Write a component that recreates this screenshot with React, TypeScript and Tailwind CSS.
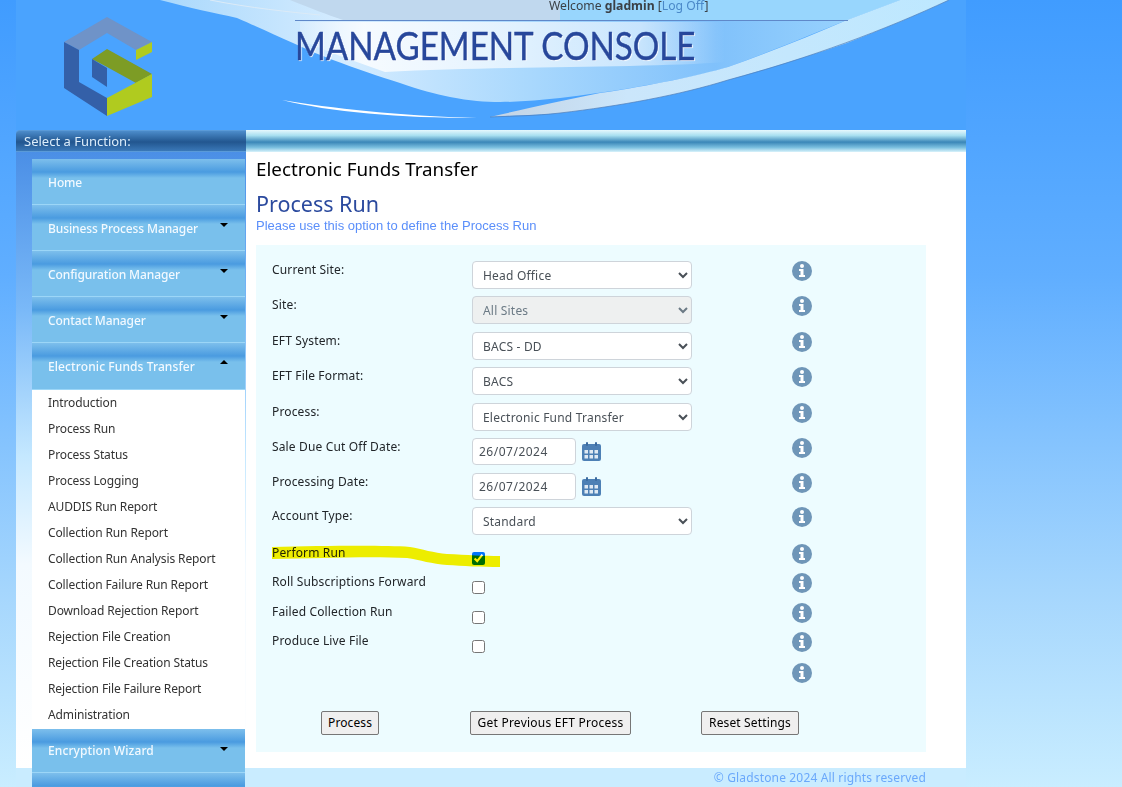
const menuTop = ["Home", "Business Process Manager", "Configuration Manager", "Contact Manager"];

const subMenu = [
  "Introduction",
  "Process Run",
  "Process Status",
  "Process Logging",
  "AUDDIS Run Report",
  "Collection Run Report",
  "Collection Run Analysis Report",
  "Collection Failure Run Report",
  "Download Rejection Report",
  "Rejection File Creation",
  "Rejection File Creation Status",
  "Rejection File Failure Report",
  "Administration",
];

const MenuItem = ({ label, caret, size = "h-[46px] pt-4 tracking-[-0.1px]" }: { label: string; caret?: "up" | "down"; size?: string }) => (
  <div
    className={`relative shrink-0 border-b border-[#9cd6f7] bg-[linear-gradient(#7dbfec,#4a9be0_13px,#79c0ec_19px,#79c0ec)] pl-4 text-[12px] font-medium leading-4 text-[#f2f9ff] ${size}`}
  >
    {label}
    {caret === "down" && (
      <span className="absolute right-[17px] top-[18px] h-0 w-0 border-x-4 border-t-4 border-x-transparent border-t-black" />
    )}
    {caret === "up" && (
      <span className="absolute right-[17px] top-[17px] h-0 w-0 border-x-4 border-b-4 border-x-transparent border-b-black" />
    )}
  </div>
);

const InfoIcon = () => (
  <svg width="20" height="20" viewBox="0 0 20 20">
    <circle cx="10" cy="10" r="10" fill="#6f96b8" />
    <circle cx="10" cy="5" r="2" fill="#fff" />
    <path d="M7 8h4.500v6H13v2H7v-2h1.500v-4H7z" fill="#fff" />
  </svg>
);

const CalendarIcon = () => (
  <svg width="21" height="21" viewBox="0 0 21 21">
    <rect x="1" y="3" width="19" height="17" rx="2" fill="#4d80b5" />
    <rect x="5" y="1" width="2" height="4" rx="1" fill="#3a6a9f" />
    <rect x="14" y="1" width="2" height="4" rx="1" fill="#3a6a9f" />
    {[3.500, 8.500, 13.500].map((x) =>
      [9, 14].map((y) => <rect key={`${x}-${y}`} x={x} y={y} width="3.500" height="3.500" fill="#dfe9f3" />)
    )}
  </svg>
);

const selectClass =
  "h-[28px] w-[220px] rounded border border-[#ced4da] bg-white pl-[6px] text-[12px] tracking-[0.2px] text-[#495057] disabled:bg-[#eef0f0] disabled:text-[#6b7a85] disabled:opacity-100";

const buttonClass = "absolute h-6 rounded-xs border border-[#767676] bg-[#efefef] text-[12px] text-black";

const FormRow = ({ label, height, children }: { label: string; height: string; children?: React.ReactNode }) => (
  <div className={`grid grid-cols-[200px_320px_20px] ${height}`}>
    <div className="pt-px text-[12px] leading-4 tracking-[0.15px] text-[#212529]">{label}</div>
    <div>{children}</div>
    <div>
      <InfoIcon />
    </div>
  </div>
);

const SelectField = ({ value, disabled }: { value: string; disabled?: boolean }) => (
  <select className={selectClass} defaultValue={value} disabled={disabled}>
    <option>{value}</option>
  </select>
);

const DateField = ({ value }: { value: string }) => (
  <div className="flex items-center gap-[5px]">
    <input
      className="h-[27px] w-[104px] rounded border border-[#ced4da] bg-white pl-[6px] text-[12px] tracking-[0.5px] text-[#495057]"
      defaultValue={value}
    />
    <CalendarIcon />
  </div>
);

export default function App() {
  return (
    <div
      className="h-[787px] w-[1122px] overflow-hidden bg-[linear-gradient(#409cff,#60aeff_35%,#a5d6fd_75%,#c9edff)] text-[12px]"
      style={{ fontFamily: '"Noto Sans", sans-serif' }}
    >
      <div className="ml-4 w-[950px]">
        {/* Header */}
        <div className="relative h-[130px] overflow-hidden bg-[#4aa3fe]">
          <svg className="absolute left-0 top-0" width="950" height="130" viewBox="16 0 950 130">
            <defs>
              <linearGradient id="waveFill" x1="0" y1="0" x2="1" y2="0">
                <stop offset="0" stopColor="#a9d8fc" />
                <stop offset="0.25" stopColor="#d5ecff" />
                <stop offset="0.5" stopColor="#a9d8fd" />
                <stop offset="0.75" stopColor="#80c1fb" />
                <stop offset="1" stopColor="#a0d8fe" />
              </linearGradient>
              <linearGradient id="bandFill" x1="0" y1="0" x2="1" y2="0">
                <stop offset="0" stopColor="#c3d3e4" />
                <stop offset="0.3" stopColor="#cbe6fb" />
                <stop offset="1" stopColor="#bde8ff" />
              </linearGradient>
              <linearGradient id="glowFill" x1="0" y1="0" x2="1" y2="0">
                <stop offset="0" stopColor="#fff" stopOpacity="0.2" />
                <stop offset="0.15" stopColor="#fff" stopOpacity="0.8" />
                <stop offset="0.8" stopColor="#fff" stopOpacity="0.5" />
                <stop offset="1" stopColor="#fff" stopOpacity="0" />
              </linearGradient>
            </defs>
            <path d="M160 0C190 8 215 13 237 18C260 28 275 35 293 43C310 51 320 55 333 60C355 68 380 77 400 83C420 90 435 94 450 97C470 101 485 102 500 102C520 102 540 100 560 98C610 92 650 85 685 78C700 75 715 71 728 67C775 50 815 33 847 20L900 0Z" fill="url(#waveFill)" />
            <path d="M290 0C310 8 328 15 343 20H560C620 14 660 8 700 0Z" fill="#c0d8ee" />
            <path d="M560 0H900L847 20H560Z" fill="#98d6fd" />
            <path d="M300 22H725V62C650 68 500 66 385 72L340 56L300 40Z" fill="url(#glowFill)" />
            <path d="M490 117C520 115 540 115 560 113C620 106 680 95 728 80C770 68 810 56 847 43C885 28 920 14 949 0H900L847 20C810 36 770 52 728 67C700 75 650 86 600 93C560 101 520 110 490 117Z" fill="url(#bandFill)" />
            <path d="M949 0C885 30 810 58 728 80C680 95 620 106 560 113C535 116 510 116 490 117" fill="none" stroke="#4f7db8" strokeWidth="0.700" />
            <path d="M282 100C330 108 400 116 477 118C400 118 330 112 282 100Z" fill="#fff" />
            <path d="M210 0C250 8 290 12 320 15" fill="none" stroke="#dcebf7" strokeWidth="1" />
          </svg>
          <div className="absolute left-[279px] top-5 h-px w-[553px] bg-[#5f88c9]" />
          <h1
            className="absolute left-[279px] top-[22px] origin-left scale-x-[0.873] whitespace-nowrap text-[38px] leading-[46px] text-[#27479b] [-webkit-text-stroke:0.4px_#27479b]"
            style={{ textShadow: "1px 1px 1px #fff", fontFamily: "Lato, sans-serif" }}
          >
            MANAGEMENT CONSOLE
          </h1>
          <div className="absolute left-[533px] top-0 text-[12.200px] leading-[12px] text-[#3b4147]">
            Welcome <b>gladmin</b> [<span className="text-[#4a88c8]">Log Off</span>]
          </div>
          <svg className="absolute left-[48px] top-[17px]" width="88" height="99" viewBox="64 17 88 99">
            <polygon points="64,42 107,17 152,42 136,50 107,33 79,50" fill="#6f93c8" />
            <polygon points="136,50 152,42 152,52 136,60" fill="#b0cb1f" />
            <polygon points="64,42 79,50 79,82 107,98 107,116 64,88" fill="#3460a8" />
            <polygon points="92,59 107,49 152,74 136,83 107,67" fill="#7d9c25" />
            <polygon points="92,59 107,68 107,87 92,77" fill="#3460a8" />
            <polygon points="107,98 152,74 152,97 107,116" fill="#b0cb1f" />
          </svg>
        </div>

        <div className="flex h-[657px]">
          {/* Sidebar */}
          <div className="flex w-[230px] shrink-0 flex-col">
            <div className="h-[22px] shrink-0 rounded-tl-sm border-y border-[#5a9ad8] bg-[linear-gradient(#4c8ccb,#22568f_55%,#3a78b8)] pl-2 text-[13px] leading-[20px] text-[#dcedfb]">
              Select a Function:
            </div>
            <div className="flex min-h-0 flex-1 flex-col overflow-hidden bg-[linear-gradient(#4b8fe6,#7ab9f8_25%,#c5e8ff_48%,#f3faff_65%,#fff_97%,#c9ecff_97%)] pl-4 pt-[7px]">
              <div className="w-[213px]">
                {menuTop.map((item, i) => (
                  <MenuItem key={item} label={item} caret={i > 0 ? "down" : undefined} />
                ))}
                <MenuItem label="Electronic Funds Transfer" caret="up" size="h-[47px] pt-4 tracking-[0.1px]" />
                <div className="bg-white pb-px">
                  {subMenu.map((item) => (
                    <div key={item} className="h-[26px] pl-4 pt-[5px] text-[12px] leading-4 tracking-[-0.12px] text-[#333]">
                      {item}
                    </div>
                  ))}
                </div>
                <MenuItem label="Encryption Wizard" caret="down" size="h-[44px] pt-[14px] tracking-[0.1px]" />
                <MenuItem label="" />
              </div>
            </div>
          </div>

          {/* Main content */}
          <div className="flex min-w-0 flex-1 flex-col">
            <div className="h-[22px] shrink-0 bg-[linear-gradient(#e6f8fd,#a8dff0_25%,#3a86b8_55%,#7cc0e0_80%,#d9f3fb)]" />
            <div className="h-[616px] bg-white pl-[10px] pr-10 pt-[3px]">
              <div className="text-[18.800px] leading-7 text-black">Electronic Funds Transfer</div>
              <div className="mt-1 text-[21.500px] leading-[33px] text-[#2b4a9e]">Process Run</div>
              <div className="-mt-[2px] text-[13px] leading-4 text-[#5b8ffa]" style={{ fontFamily: '"Liberation Sans", sans-serif' }}>
                Please use this option to define the Process Run
              </div>
              <div className="mt-[11px] h-[507px] bg-[#edfcff] pl-4 pt-4">
                <FormRow label="Current Site:" height="h-[35px]"><SelectField value="Head Office" /></FormRow>
                <FormRow label="Site:" height="h-[36px]"><SelectField value="All Sites" disabled /></FormRow>
                <FormRow label="EFT System:" height="h-[35px]"><SelectField value="BACS - DD" /></FormRow>
                <FormRow label="EFT File Format:" height="h-[36px]"><SelectField value="BACS" /></FormRow>
                <FormRow label="Process:" height="h-[35px]"><SelectField value="Electronic Fund Transfer" /></FormRow>
                <FormRow label="Sale Due Cut Off Date:" height="h-[35px]"><DateField value="26/07/2024" /></FormRow>
                <FormRow label="Processing Date:" height="h-[34px]"><DateField value="26/07/2024" /></FormRow>
                <FormRow label="Account Type:" height="h-[37px]"><SelectField value="Standard" /></FormRow>
                <div className="relative">
                  {/* marker highlight drawn over the row */}
                  <svg className="absolute left-0 top-0 mix-blend-multiply" width="228" height="26" viewBox="0 0 228 26">
                    <path d="M0 3C50 2 110 1 138 3C150 5 162 9 175 10C195 11 212 12 228 12V23C210 23 190 22 175 21C160 20 148 16 135 14C100 12 50 14 0 15Z" fill="#fff000" />
                  </svg>
                </div>
                <FormRow label="Perform Run" height="h-[29px]">
                  <input type="checkbox" defaultChecked className="mt-2 h-[13px] w-[13px]" />
                </FormRow>
                <FormRow label="Roll Subscriptions Forward" height="h-[30px]">
                  <input type="checkbox" className="mt-2 h-[13px] w-[13px]" />
                </FormRow>
                <FormRow label="Failed Collection Run" height="h-[29px]">
                  <input type="checkbox" className="mt-2 h-[13px] w-[13px]" />
                </FormRow>
                <FormRow label="Produce Live File" height="h-[31px]">
                  <input type="checkbox" className="mt-2 h-[13px] w-[13px]" />
                </FormRow>
                <FormRow label="" height="h-[48px]" />
                <div className="relative">
                  <button className={`${buttonClass} left-[49px] w-[58px] tracking-[0.1px]`}>Process</button>
                  <button className={`${buttonClass} left-[198px] w-[161px] tracking-[0.25px]`}>Get Previous EFT Process</button>
                  <button className={`${buttonClass} left-[429px] w-[98px] tracking-[0.15px]`}>Reset Settings</button>
                </div>
              </div>
            </div>
            <div className="flex-1 bg-[#c9ecff] pr-10 text-right text-[12px] leading-[19px] tracking-[0.16px] text-[#6aa8fb]">
              © Gladstone 2024 All rights reserved
            </div>
          </div>
        </div>
      </div>
    </div>
  );
}
